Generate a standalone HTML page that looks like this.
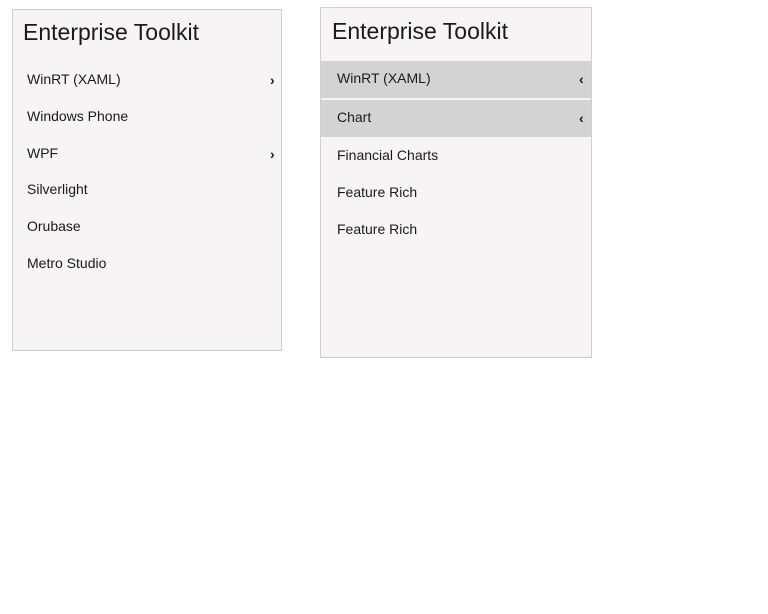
<html><head><style>
body{margin:0;width:768px;height:614px;background:#fff;font-family:"Liberation Sans",sans-serif;color:#1a1a1a;position:relative;overflow:hidden}
.p{position:absolute;background:#f6f4f5;border:1px solid #cfcfcf;box-sizing:border-box}
.t{position:absolute;font-size:23px;white-space:nowrap}
.i{position:absolute;font-size:14px;white-space:nowrap;line-height:16px}
.h{position:absolute;left:0;right:0;background:#d3d3d3}
.c{position:absolute;font-size:14px;font-weight:bold;line-height:16px}
</style></head><body>
<div class="p" style="left:12px;top:9px;width:270px;height:342px">
<div class="t" style="left:10px;top:9px">Enterprise Toolkit</div>
<div class="i" style="left:14px;top:61px">WinRT (XAML)</div><div class="c" style="left:257px;top:62px">›</div>
<div class="i" style="left:14px;top:98px">Windows Phone</div>
<div class="i" style="left:14px;top:135px">WPF</div><div class="c" style="left:257px;top:136px">›</div>
<div class="i" style="left:14px;top:171px">Silverlight</div>
<div class="i" style="left:14px;top:208px">Orubase</div>
<div class="i" style="left:14px;top:245px">Metro Studio</div>
</div>
<div class="p" style="left:320px;top:7px;width:272px;height:351px">
<div class="t" style="left:11px;top:10px">Enterprise Toolkit</div>
<div class="h" style="top:53px;height:37px"></div>
<div class="h" style="top:92px;height:37px"></div>
<div class="i" style="left:16px;top:62px">WinRT (XAML)</div><div class="c" style="left:258px;top:63px">‹</div>
<div class="i" style="left:16px;top:101px">Chart</div><div class="c" style="left:258px;top:102px">‹</div>
<div class="i" style="left:16px;top:139px">Financial Charts</div>
<div class="i" style="left:16px;top:176px">Feature Rich</div>
<div class="i" style="left:16px;top:213px">Feature Rich</div>
</div>
</body></html>
